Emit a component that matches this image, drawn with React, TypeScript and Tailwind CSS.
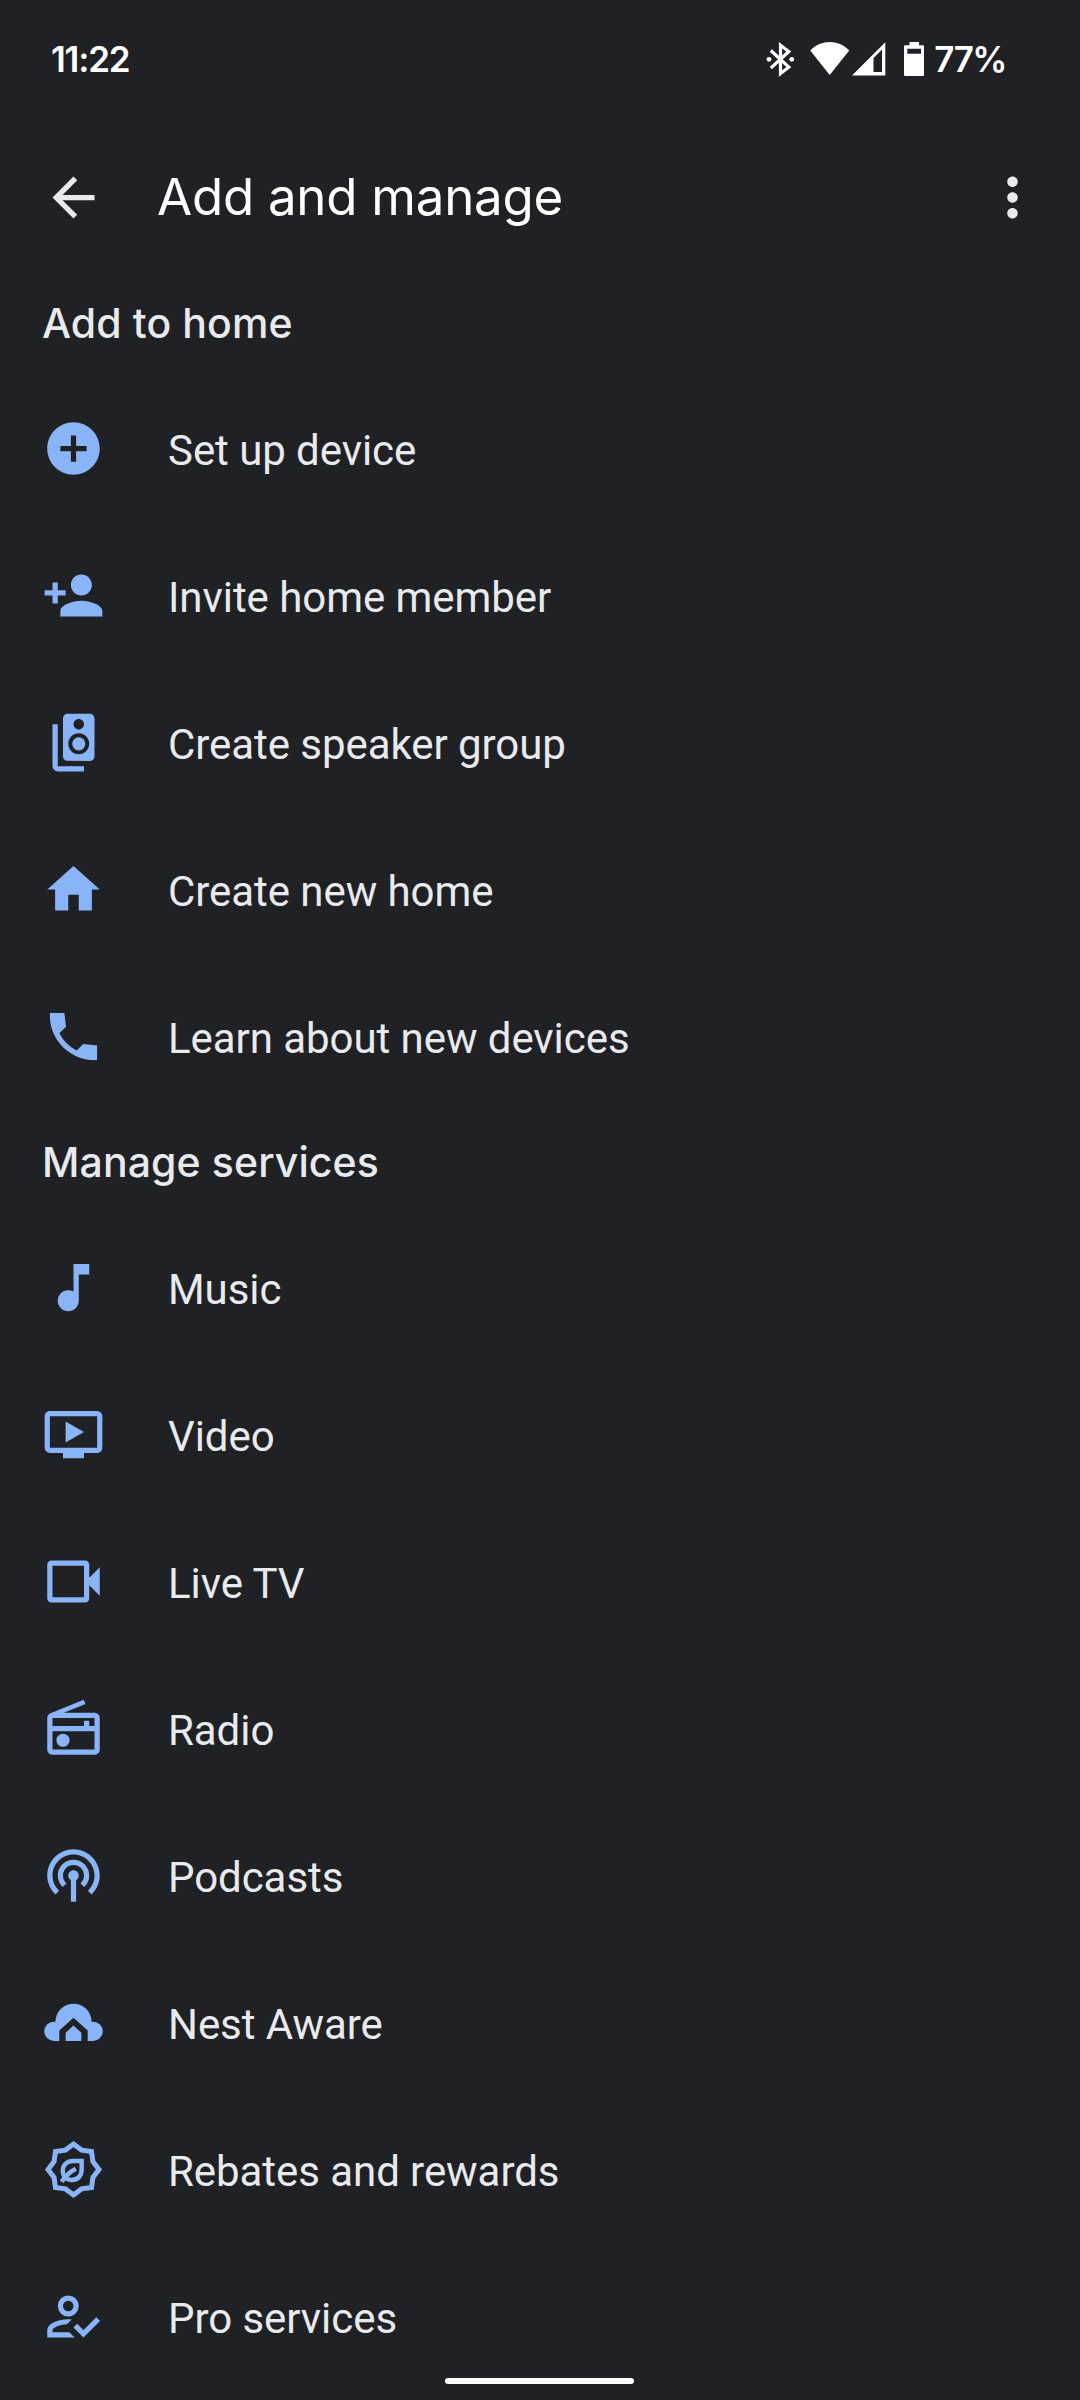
import type { ReactNode } from 'react';
import {
  MdAddCircle,
  MdArrowBack,
  MdHome,
  MdMoreVert,
  MdMusicNote,
  MdOndemandVideo,
  MdOutlineRadio,
  MdPersonAdd,
  MdPodcasts,
  MdSpeakerGroup,
} from 'react-icons/md';

type Item = { label: string; icon: ReactNode };

// eight-pointed badge outline
const star = Array.from({ length: 16 }, (_, i) => {
  const r = i % 2 ? 8 : 9.7;
  const a = (i * Math.PI) / 8;
  return `${(12 + r * Math.sin(a)).toFixed(2)},${(12 - r * Math.cos(a)).toFixed(2)}`;
}).join(' ');

function Svg({ children }: { children: ReactNode }) {
  return (
    <svg viewBox="0 0 24 24" className="size-[63px]" fill="currentColor">
      {children}
    </svg>
  );
}

function Phone() {
  return (
    <Svg>
      <path d="M21 15.46l-5.27-.61-2.52 2.52a15.05 15.05 0 0 1-6.59-6.59l2.53-2.53L8.54 3H3.03C2.45 13.18 10.82 21.55 21 20.97v-5.51z" />
    </Svg>
  );
}

function LiveTv() {
  return (
    <Svg>
      <path fillRule="evenodd" d="M3.6 4h12.8c.9 0 1.6.7 1.6 1.6v5l4-4v10.8l-4-4v5c0 .9-.7 1.6-1.6 1.6H3.6c-.9 0-1.6-.7-1.6-1.6V5.6C2 4.7 2.7 4 3.6 4zM4 6v12h12V6z" />
    </Svg>
  );
}

function NestAware() {
  return (
    <Svg>
      <path d="M6.600 19H4.500a3.650 3.650 0 0 1 0-7.300L5.100 11.750a6.900 6.900 0 0 1 13.800 0L19.500 11.700a3.650 3.650 0 0 1 0 7.300h-2.100v-4L12 10.200 6.600 15z" />
      <path d="M9 19v-3.100l3-2.750 3 2.750V19z" />
    </Svg>
  );
}

function Rebates() {
  return (
    <Svg>
      <g fill="none" stroke="currentColor">
        <polygon points={star} strokeWidth="1.9" />
        <path d="M15.100 8.750h-3.300c-2.300 0-3.900 1.600-3.900 3.750 0 2 1.500 3.500 3.500 3.500 2.200 0 3.700-1.600 3.700-3.900z" strokeWidth="1.700" />
        <path d="M7.500 16.700c1.300-2.200 2.900-3.700 5.400-5" strokeWidth="1.700" />
      </g>
    </Svg>
  );
}

function ProServices() {
  return (
    <Svg>
      <g fill="none" stroke="currentColor" strokeWidth="2">
        <circle cx="10" cy="8" r="3" />
        <path d="M12.700 15.500l3.100 3.100 5.600-5.600" />
      </g>
      <path d="M11.300 13.100C7.500 12.600 2 14.200 2 17.200V20h10.400l-2-2H4v-.7c0-1 3.100-2.300 5.500-2.300z" />
    </Svg>
  );
}

const home: Item[] = [
  { label: 'Set up device', icon: <MdAddCircle size={63} /> },
  { label: 'Invite home member', icon: <MdPersonAdd size={63} /> },
  { label: 'Create speaker group', icon: <MdSpeakerGroup size={63} /> },
  { label: 'Create new home', icon: <MdHome size={63} /> },
  { label: 'Learn about new devices', icon: <Phone /> },
];

const services: Item[] = [
  { label: 'Music', icon: <MdMusicNote size={63} /> },
  { label: 'Video', icon: <MdOndemandVideo size={63} /> },
  { label: 'Live TV', icon: <LiveTv /> },
  { label: 'Radio', icon: <MdOutlineRadio size={63} /> },
  { label: 'Podcasts', icon: <MdPodcasts size={63} /> },
  { label: 'Nest Aware', icon: <NestAware /> },
  { label: 'Rebates and rewards', icon: <Rebates /> },
  { label: 'Pro services', icon: <ProServices /> },
];

function StatusBar() {
  return (
    <header className="flex h-[118px] shrink-0 items-center justify-between pl-[51px] pr-[74px] text-[35px] font-semibold leading-none text-white">
      <span className="tracking-[-1.2px]">11:22</span>
      <div className="flex items-center">
        <svg width="170" height="40" viewBox="759 39 170 40" fill="currentColor">
          <path d="M770.800 50.500l18 16.700-8.300 6.300V45.200l8.300 6.300-18 16.700" fill="none" stroke="currentColor" strokeWidth="3.200" />
          <circle cx="769" cy="59.300" r="2.400" />
          <circle cx="791.700" cy="59.300" r="2.400" />
          <path d="M829.700 75l-19.500-24.500c11-11.300 28-11.300 39 0z" />
          <path fillRule="evenodd" d="M852 75.500l33.300-33.300v33.300zM873.500 58v14h8.500V49.500z" />
          <path fillRule="evenodd" d="M909.500 42h9.500v3.300h3.500c1 0 1.500.5 1.500 1.500V74.500c0 1-.5 1.500-1.500 1.500h-17c-1 0-1.500-.5-1.500-1.500V46.800c0-1 .5-1.500 1.500-1.500h4zM907.300 48.700v5H921v-5z" />
        </svg>
        <span className="ml-[5px] tracking-[-1.5px]">77%</span>
      </div>
    </header>
  );
}

function TopBar() {
  return (
    <div className="flex h-[153px] shrink-0 items-center pl-[42px] pr-[36px] pt-[6px] text-[#e8eaed]">
      <MdArrowBack size={63} />
      <h1 className="ml-[52px] flex-1 pb-[2px] text-[51px] leading-none tracking-[-0.25px] text-white">Add and manage</h1>
      <MdMoreVert size={63} />
    </div>
  );
}

function Section({ title, items }: { title: string; items: Item[] }) {
  return (
    <section>
      <h2 className="flex h-[104px] items-center pl-[42px] text-[41px] font-medium leading-none tracking-[0.1px] text-[#e8eaed]">{title}</h2>
      <ul>
        {items.map((item) => (
          <li key={item.label} className="flex h-[147px] items-center pl-[42px]">
            <span className="text-[#8ab4f8]">{item.icon}</span>
            <span className="ml-[63px] pt-[4px] font-[Roboto,sans-serif] text-[42px] leading-none tracking-[-0.06px] text-[#e8eaed]">{item.label}</span>
          </li>
        ))}
      </ul>
    </section>
  );
}

export default function App() {
  return (
    <div className="relative flex h-[2400px] w-[1080px] flex-col overflow-hidden bg-[#202124] font-[Inter,sans-serif]">
      <StatusBar />
      <TopBar />
      <Section title="Add to home" items={home} />
      <Section title="Manage services" items={services} />
      <div className="absolute bottom-[16px] left-[445px] h-[6px] w-[189px] rounded-full bg-white" />
    </div>
  );
}
